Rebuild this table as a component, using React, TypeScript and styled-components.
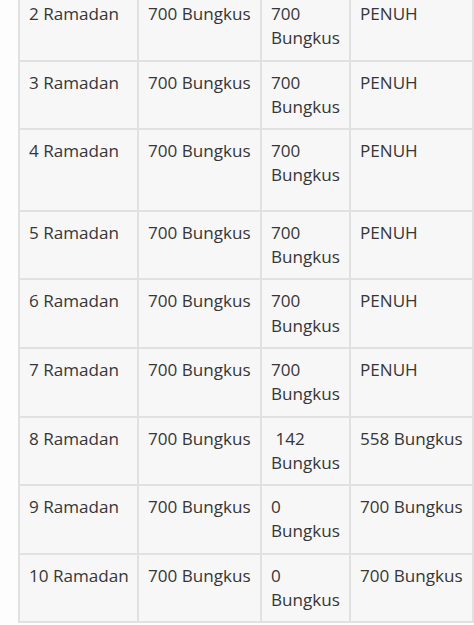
import React from "react";
import styled, { createGlobalStyle } from "styled-components";

const Global = createGlobalStyle`
  html, body { margin: 0; padding: 0; background: #fdfdfd; }
  body { font-family: "Open Sans", "Liberation Sans", sans-serif; overflow: hidden; }
`;

const Page = styled.div`
  padding: 0 2px 0 18px;
  margin-top: -9px;
`;

const Table = styled.table`
  border-collapse: collapse;
  table-layout: fixed;
  width: 454px;
  background: #f7f7f7;
  color: #363636;
  font-size: 17.1px;
  line-height: 24.3px;
`;

const Col = styled.col<{ $w: number }>`
  width: ${(p) => p.$w}px;
`;

const Cell = styled.td<{ $tall?: boolean }>`
  border: 2px solid #e1e1e1;
  padding: 9px 3px ${(p) => (p.$tall ? "22px" : "9px")} 9px;
  vertical-align: top;
  text-align: left;
  white-space: pre-wrap;
`;

const widths = [119, 123, 89, 123];

const rows: [string, string, string, string][] = [
  ["2 Ramadan", "700 Bungkus", "700 Bungkus", "PENUH"],
  ["3 Ramadan", "700 Bungkus", "700 Bungkus", "PENUH"],
  ["4 Ramadan", "700 Bungkus", "700 Bungkus", "PENUH"],
  ["5 Ramadan", "700 Bungkus", "700 Bungkus", "PENUH"],
  ["6 Ramadan", "700 Bungkus", "700 Bungkus", "PENUH"],
  ["7 Ramadan", "700 Bungkus", "700 Bungkus", "PENUH"],
  ["8 Ramadan", "700 Bungkus", " 142 Bungkus", "558 Bungkus"],
  ["9 Ramadan", "700 Bungkus", "0 Bungkus", "700 Bungkus"],
  ["10 Ramadan", "700 Bungkus", "0 Bungkus", "700 Bungkus"],
];

export default function App() {
  return (
    <>
      <Global />
      <Page>
        <Table>
          <colgroup>
            {widths.map((w, i) => (
              <Col key={i} $w={w} />
            ))}
          </colgroup>
          <tbody>
            {rows.map((r) => {
              const tall = r[0] === "4 Ramadan";
              return (
                <tr key={r[0]}>
                  {r.map((c, i) => (
                    <Cell key={i} $tall={tall}>
                      {c}
                    </Cell>
                  ))}
                </tr>
              );
            })}
          </tbody>
        </Table>
      </Page>
    </>
  );
}
